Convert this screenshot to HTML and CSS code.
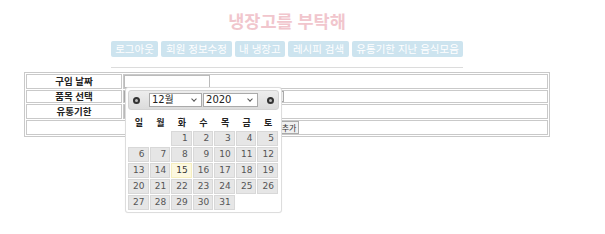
FILE: index.html
```html
<!DOCTYPE html>
<html lang="ko">
  <head>
    <meta charset="UTF-8" />
    <title>냉장고를 부탁해</title>
    <link rel="stylesheet" href="styles.css">
  </head>
  <body>
    <div class="header">
      <!-- 타이틀 -->
      <h1 class="title">냉장고를 부탁해</h1>

      <!-- 메뉴 -->
      <div class="menu-wrap">
        <div class="menu">
          <a href="#">로그아웃</a>
          <a href="#">회원 정보수정</a>
          <a href="#">내 냉장고</a>
          <a href="#">레시피 검색</a>
          <a href="#">유통기한 지난 음식모음</a>
        </div>
      </div>
    </div>

    <!-- 입력 폼 -->
    <table class="form-table">
      <tr>
        <th>구입 날짜</th>
        <td><input type="text" class="date-input" /></td>
      </tr>
      <tr>
        <th>품목 선택</th>
        <td>
          <select class="item-select">
            <option></option>
          </select>
        </td>
      </tr>
      <tr>
        <th>유통기한</th>
        <td><input type="text" class="date-input" /></td>
      </tr>
      <tr>
        <td colspan="2" class="submit-cell"><button class="add-btn">추가</button></td>
      </tr>
    </table>

    <!-- 달력 -->
    <div class="datepicker">
      <div class="dp-header">
        <span class="dp-arrow"></span>
        <span class="dp-select month">
          <select>
            <option>12월</option>
          </select>
        </span>
        <span class="dp-select year">
          <select>
            <option>2020</option>
          </select>
        </span>
        <span class="dp-arrow next"></span>
      </div>
      <table class="dp-calendar">
        <thead>
          <tr>
            <th>일</th><th>월</th><th>화</th><th>수</th><th>목</th><th>금</th><th>토</th>
          </tr>
        </thead>
        <tbody>
          <tr>
            <td></td><td></td><td><a>1</a></td><td><a>2</a></td><td><a>3</a></td><td><a>4</a></td><td><a>5</a></td>
          </tr>
          <tr>
            <td><a>6</a></td><td><a>7</a></td><td><a>8</a></td><td><a>9</a></td><td><a>10</a></td><td><a>11</a></td><td><a>12</a></td>
          </tr>
          <tr>
            <td><a>13</a></td><td><a>14</a></td><td><a class="today">15</a></td><td><a>16</a></td><td><a>17</a></td><td><a>18</a></td><td><a>19</a></td>
          </tr>
          <tr>
            <td><a>20</a></td><td><a>21</a></td><td><a>22</a></td><td><a>23</a></td><td><a>24</a></td><td><a>25</a></td><td><a>26</a></td>
          </tr>
          <tr>
            <td><a>27</a></td><td><a>28</a></td><td><a>29</a></td><td><a>30</a></td><td><a>31</a></td><td></td><td></td>
          </tr>
        </tbody>
      </table>
    </div>
  </body>
</html>
```

FILE: styles.css
```css
/* 공통 */
body {
  font-family: "DejaVu Sans", "Noto Sans CJK KR", sans-serif;
  margin: 8px;
  background-color: #fff;
  color: #222;
}

/* 상단 */
.header {
  width: 558px;
}

/* 타이틀 */
.title {
  margin: 0;
  text-align: center;
  font-size: 17.5px;
  line-height: 26px;
  font-weight: bold;
  color: #f1c6cd;
  font-family: "Noto Sans CJK KR", sans-serif;
}

/* 메뉴 */
.menu-wrap {
  display: flex;
  justify-content: center;
  margin-top: 7px;
}

.menu {
  display: flex;
  gap: 3px;
  padding-bottom: 10px;
  border-bottom: 1px solid #dcdcdc;
}

.menu a {
  display: block;
  background-color: #cde4ef;
  color: #fff;
  font-family: "Noto Sans CJK KR", sans-serif;
  font-size: 10.5px;
  line-height: 16px;
  padding: 0 4.6px;
  border-radius: 2px;
  text-decoration: none;
}

/* 입력 폼 */
.form-table {
  margin: 4px 0 0 16px;
  width: 526px;
  border: 1px solid #c9c9c9;
  border-spacing: 1px;
  font-family: "Noto Sans CJK KR", sans-serif;
  font-size: 9.5px;
}

.form-table th,
.form-table td {
  border: 1px solid #c9c9c9;
  padding: 0;
  height: 11px;
  line-height: 11px;
}

.form-table th {
  width: 94px;
  font-weight: bold;
}

.date-input {
  display: block;
  width: 84px;
  height: 11px;
  margin: 0;
  padding: 0;
  border: 1px solid #bbb;
  box-sizing: content-box;
}

.item-select {
  display: block;
  width: 160px;
  height: 11px;
  font-size: 8px;
  border: 1px solid #aaa;
  padding: 0;
}

.submit-cell {
  text-align: center;
  height: 13px !important;
}

.add-btn {
  font-family: "Noto Sans CJK KR", sans-serif;
  font-size: 8px;
  line-height: 9px;
  padding: 1px 2px;
  background: #f0f0f0;
  border: 1px solid #aaa;
  color: #333;
  margin-left: 4px;
}

/* 달력 */
.datepicker {
  position: absolute;
  left: 125px;
  top: 87px;
  width: 151px;
  padding: 2px 2px 1px;
  background: #fff;
  border: 1px solid #ddd;
  border-radius: 3px;
  box-shadow: 0 0 1px rgba(0, 0, 0, 0.1);
}

.dp-header {
  display: flex;
  align-items: center;
  height: 18px;
  padding: 0 4px;
  background: linear-gradient(#ededed, #dcdcdc);
  border: 1px solid #d3d3d3;
  border-radius: 3px;
}

.dp-arrow {
  width: 7px;
  height: 7px;
  border-radius: 50%;
  background: #333;
  position: relative;
  margin-right: 9px;
}

.dp-arrow::after {
  content: "";
  position: absolute;
  left: 2px;
  top: 2px;
  width: 3px;
  height: 3px;
  background: #bbb;
  border-radius: 50%;
}

.dp-arrow.next {
  margin: 0 0 0 9px;
}

.dp-select {
  position: relative;
  display: block;
}

.dp-select select {
  display: block;
  width: 100%;
  height: 14px;
  appearance: none;
  font-family: "DejaVu Sans", "Noto Sans CJK KR", sans-serif;
  font-size: 10px;
  line-height: 12px;
  padding: 0 2px;
  border: 1px solid #aaa;
  border-radius: 0;
  background: #fff;
  color: #222;
}

/* 드롭다운 화살표 */
.dp-select::after {
  content: "";
  position: absolute;
  right: 6px;
  top: 4px;
  width: 3px;
  height: 3px;
  border-right: 1px solid #555;
  border-bottom: 1px solid #555;
  transform: rotate(45deg);
}

.dp-select.month {
  width: 54px;
}

.dp-select.year {
  width: 56px;
  margin-left: 1px;
}

.dp-calendar {
  width: 100%;
  border-collapse: collapse;
  margin-top: 3px;
  font-size: 9px;
}

.dp-calendar th {
  font-family: "Noto Sans CJK KR", sans-serif;
  font-weight: bold;
  height: 18px;
  padding: 0;
  color: #222;
}

.dp-calendar td {
  padding: 0 1px 1px 0;
}

.dp-calendar a {
  display: block;
  height: 13px;
  line-height: 13px;
  text-align: right;
  padding-right: 3px;
  background: #e6e6e6;
  border: 1px solid #d8d8d8;
  color: #555;
}

.dp-calendar a.today {
  background: #fcf8e0;
  border-color: #f5eebe;
  color: #363636;
}
```
